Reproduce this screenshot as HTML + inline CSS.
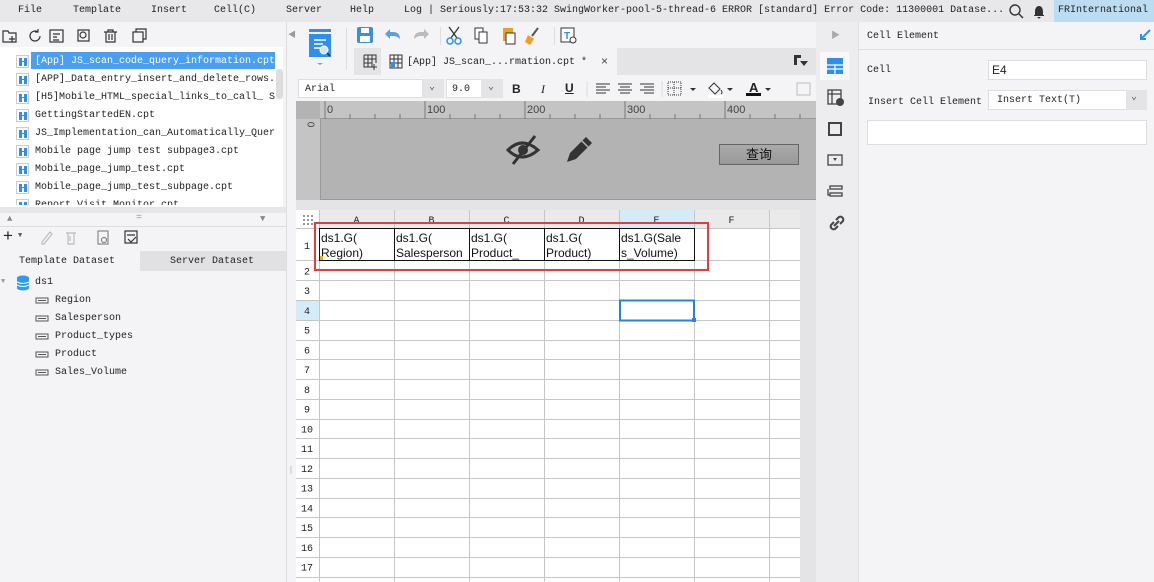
<!DOCTYPE html>
<html><head><meta charset="utf-8">
<style>
*{margin:0;padding:0;box-sizing:border-box}
html,body{width:1154px;height:582px;overflow:hidden}
body{background:#f4f4f6;font-family:"Liberation Mono","Noto Sans CJK SC",monospace;font-size:10px;color:#222;position:relative}
.a{position:absolute}
.t{position:absolute;white-space:nowrap}
</style></head><body>
<div class="a" style="left:0;top:0;width:1154px;height:22px;background:#e8e8ea"></div>
<div class="t" style="left:18px;top:5px">File</div>
<div class="t" style="left:73px;top:5px">Template</div>
<div class="t" style="left:151px;top:5px">Insert</div>
<div class="t" style="left:214px;top:5px">Cell(C)</div>
<div class="t" style="left:286px;top:5px">Server</div>
<div class="t" style="left:350px;top:5px">Help</div>
<div class="t" style="left:404px;top:5px">Log | Seriously:17:53:32 SwingWorker-pool-5-thread-6 ERROR [standard] Error Code: 11300001 Datase...</div>
<svg class="a" style="left:1008px;top:3px" width="40" height="16"><circle cx="7" cy="7" r="5" fill="none" stroke="#333" stroke-width="1.4"/><path d="M11 11l4 4" stroke="#333" stroke-width="1.5"/><path d="M31 3c-3 0-4 3-4 6v3h-1v1h10v-1h-1V9c0-3-1-6-4-6zM29.5 14h3a1.5 1.5 0 0 1-3 0z" fill="#333"/></svg>
<div class="a" style="left:1054px;top:0;width:100px;height:22px;background:#bcdcf2"></div>
<div class="t" style="left:1058px;top:5px">FRInternational</div>

<div class="a" style="left:0;top:22px;width:286px;height:560px;background:#f4f4f6"></div>
<svg class="a" style="left:0;top:26px" width="150" height="20" fill="none" stroke="#333" stroke-width="1.2">
<path d="M3 5h5l1 2h7v9H3z"/><path d="M12 10v6M9 13h6"/>
<path d="M38 6a5 5 0 1 0 2 4M38 3v3h-3"/>
<rect x="50" y="4" width="13" height="12"/><path d="M53 8h7M53 11h4M53 14h6"/>
<rect x="78" y="4" width="11" height="11"/><circle cx="83" cy="9" r="3"/>
<path d="M104 6h13M108 6V4h5v2M106 6v10h9V6M109 8v6M112 8v6"/>
<rect x="133" y="6" width="10" height="10"/><path d="M136 6V3h10v10h-3"/>
</svg>
<div class="a" style="left:0;top:47px;width:283px;height:160px;background:#fff"></div>
<div class="a" style="left:31px;top:52px;width:244px;height:17px;background:#4a9ff5"></div>
<div id="files"></div>
<div class="a" style="left:276px;top:69px;width:7px;height:30px;background:#ddd;border-radius:3px"></div>
<div class="a" style="left:0;top:207px;width:286px;height:6px;background:#e6e6e6"></div>
<div class="t" style="left:7px;top:214px;color:#888;font-size:9px">▲</div>
<div class="t" style="left:136px;top:213px;color:#999">=</div>
<div class="t" style="left:260px;top:214px;color:#888;font-size:9px">▼</div>
<div class="a" style="left:0;top:226px;width:286px;height:1px;background:#ddd"></div>
<div class="t" style="left:3px;top:226px;font-size:17px;font-family:'Liberation Sans';color:#222">+</div>
<div class="t" style="left:18px;top:232px;font-size:7px;color:#555">▼</div>
<svg class="a" style="left:36px;top:228px" width="110" height="18" fill="none" stroke="#bbb" stroke-width="1.2"><path d="M6 14l8-10 2 2-8 10H6z"/><path d="M30 5h10M32 5v11h6V5M34 8v5"/><rect x="62" y="3" width="10" height="13" stroke="#888"/><circle cx="68" cy="12" r="2.5" stroke="#888"/><rect x="89" y="3" width="12" height="12" stroke="#333"/><path d="M91 7h8M92 11l3 3 5-5" stroke="#333"/></svg>
<div class="a" style="left:0;top:251px;width:286px;height:20px;background:#f4f4f6"></div>
<div class="a" style="left:140px;top:251px;width:146px;height:20px;background:#e1e1e3"></div>
<div class="t" style="left:19px;top:256px">Template Dataset</div>
<div class="t" style="left:170px;top:256px">Server Dataset</div>
<div class="t" style="left:1px;top:278px;font-size:7px;color:#999">▼</div>
<svg class="a" style="left:15px;top:274px" width="16" height="18"><ellipse cx="8" cy="4" rx="6" ry="2.5" fill="#2f9bf0"/><rect x="2" y="4" width="12" height="10" fill="#2f9bf0"/><ellipse cx="8" cy="14" rx="6" ry="2.5" fill="#2f9bf0"/><path d="M2 8q6 3 12 0M2 11q6 3 12 0" stroke="#fff" fill="none"/></svg>
<div class="t" style="left:35px;top:277px">ds1</div>
<div id="fields"></div>

<div class="a" style="left:286px;top:22px;width:1px;height:560px;background:#ddd"></div>
<div class="t" style="left:287px;top:465px;color:#aaa;font-size:8px">‖</div>

<div class="a" style="left:288px;top:22px;width:528px;height:26px;background:#f4f4f6"></div>
<div class="t" style="left:288px;top:29px;color:#999;font-size:8px">◀</div>
<svg class="a" style="left:306px;top:28px" width="30" height="38"><rect x="3" y="1" width="22" height="3" fill="#2f8ff0"/><rect x="3" y="6" width="22" height="23" fill="#2f8ff0"/><path d="M8 12h12M8 16h9M8 20h7" stroke="#fff" stroke-width="1.5"/><circle cx="18" cy="22" r="4" fill="#cfe6fb" stroke="#fff"/><path d="M21 25l3 3" stroke="#333" stroke-width="1.5"/><path d="M11 35l3 2 3-2z" fill="#999"/></svg>
<div class="a" style="left:346px;top:28px;width:1px;height:42px;background:#ddd"></div>
<svg class="a" style="left:354px;top:25px" width="240" height="22">
<rect x="3" y="2" width="16" height="16" rx="2" fill="#3a8fe0"/><rect x="7" y="3" width="8" height="5" fill="#fff"/><rect x="6" y="11" width="10" height="6" fill="#fff"/>
<path d="M46 14c0-5-3-7-7-7h-3v-3l-5 5 5 5v-3h3c3 0 5 1 7 3z" fill="#5a9ee8"/>
<path d="M60 14c0-5 3-7 7-7h3v-3l5 5-5 5v-3h-3c-3 0-5 1-7 3z" fill="#bbb"/>
<rect x="86" y="2" width="1" height="18" fill="#ddd"/>
<path d="M95 2l8 11M105 2l-8 11" stroke="#333" stroke-width="1.3"/><circle cx="96" cy="16" r="3" fill="none" stroke="#2f8ff0" stroke-width="1.5"/><circle cx="104" cy="16" r="3" fill="none" stroke="#2f8ff0" stroke-width="1.5"/>
<rect x="121" y="3" width="8" height="11" fill="#fff" stroke="#333"/><rect x="125" y="7" width="8" height="11" fill="#fff" stroke="#333"/>
<rect x="149" y="3" width="10" height="13" fill="#f0a020"/><rect x="152" y="8" width="9" height="11" fill="#fff" stroke="#333"/>
<path d="M184 3l-6 8" stroke="#555" stroke-width="2"/><path d="M174 10l6 4-4 6-5-3z" fill="#f0a020"/>
<rect x="200" y="2" width="1" height="18" fill="#ddd"/>
<rect x="207" y="3" width="13" height="14" fill="#fff" stroke="#333"/><text x="210" y="14" font-size="10" fill="#2f8ff0" font-family="Liberation Sans" font-weight="bold">T</text><circle cx="219" cy="15" r="3" fill="#fff" stroke="#333"/>
</svg>
<div class="a" style="left:354px;top:48px;width:462px;height:27px;background:#e4e4e6"></div>
<div class="a" style="left:381px;top:48px;width:236px;height:27px;background:#f4f4f6"></div>
<svg class="a" style="left:362px;top:52px" width="60" height="20" fill="none" stroke="#333"><path d="M2 3h12v8M2 3v12h8M2 7h12M2 11h8M6 3v12M10 3v12M12 12v6M9 15h6"/><rect x="28" y="3" width="12" height="13"/><path d="M28 7h12M28 11h12M32 3v13M36 3v13"/><rect x="29" y="10" width="4" height="6" fill="#2f8ff0" stroke="none"/></svg>
<div class="t" style="left:407px;top:57px">[App] JS_scan_...rmation.cpt *</div>
<div class="t" style="left:601px;top:54px;font-size:12px;color:#444;font-family:'Liberation Sans'">×</div>
<svg class="a" style="left:793px;top:54px" width="16" height="14"><path d="M1 1h7v3H4v7H1z" fill="#333"/><path d="M7 7h8l-4 5z" fill="#333"/></svg>
<div class="a" style="left:298px;top:79px;width:128px;height:19px;background:#fff;border:1px solid #ddd"></div>
<div class="a" style="left:422px;top:79px;width:22px;height:19px;background:#e4e4e6"></div>
<div class="t" style="left:305px;top:84px">Arial</div>
<div class="t" style="left:429px;top:81px;color:#555">⌄</div>
<div class="a" style="left:446px;top:79px;width:57px;height:19px;background:#fff;border:1px solid #ddd"></div>
<div class="a" style="left:481px;top:79px;width:22px;height:19px;background:#e4e4e6"></div>
<div class="t" style="left:452px;top:84px">9.0</div>
<div class="t" style="left:488px;top:81px;color:#555">⌄</div>
<div class="t" style="left:512px;top:82px;font:bold 12px 'Liberation Sans'">B</div>
<div class="t" style="left:541px;top:82px;font:italic 12px 'Liberation Serif'">I</div>
<div class="t" style="left:565px;top:81px;font:bold 12px 'Liberation Sans';text-decoration:underline">U</div>
<svg class="a" style="left:586px;top:80px" width="230" height="18" stroke="#333" fill="none">
<path d="M1 1v16" stroke="#ddd"/><path d="M10 4h14M10 7h10M10 10h14M10 13h10M32 4h14M34 7h10M32 10h14M34 13h10M54 4h14M58 7h10M54 10h14M58 13h10"/>
<path d="M76 1v16" stroke="#ddd"/><rect x="82" y="2" width="13" height="13" stroke-dasharray="1 1"/><path d="M88 2v13M82 8h13" stroke-dasharray="1 1"/><path d="M104 8h6l-3 3z" fill="#333" stroke="none"/>
<path d="M128 3l6 6-5 5-6-6z"/><path d="M135 10q2 3 0 4"/><rect x="122" y="15" width="15" height="3" fill="#fff" stroke="none"/><path d="M141 8h6l-3 3z" fill="#333" stroke="none"/>
<text x="163" y="12" font-family="Liberation Sans" font-weight="bold" font-size="13" fill="#222" stroke="none">A</text><rect x="160" y="13" width="15" height="3" fill="#111" stroke="none"/><path d="M179 8h6l-3 3z" fill="#333" stroke="none"/>
<rect x="211" y="3" width="13" height="12" stroke="#bbb"/>
</svg>
<div class="a" style="left:296px;top:101px;width:520px;height:107px;background:#b3b3b3"></div>
<div class="a" style="left:320px;top:101px;width:496px;height:18px;background:#c4c4c4;border-bottom:1px solid #999"></div>
<div class="a" style="left:296px;top:119px;width:24px;height:81px;background:#c4c4c4"></div>
<div class="a" style="left:320px;top:119px;width:496px;height:81px;border-left:1px solid #999;border-bottom:1px solid #999"></div>
<svg class="a" style="left:320px;top:101px" width="496" height="18" stroke="#777"><path d="M5 0v18M105 0v18M205 0v18M305 0v18M405 0v18M30 13v5M55 13v5M80 13v5M130 13v5M155 13v5M180 13v5M230 13v5M255 13v5M280 13v5M330 13v5M355 13v5M380 13v5M430 13v5M455 13v5M480 13v5"/>
<g fill="#444" stroke="none" font-family="Liberation Sans" font-size="11"><text x="7" y="12">0</text><text x="107" y="12">100</text><text x="207" y="12">200</text><text x="307" y="12">300</text><text x="407" y="12">400</text></g></svg>
<div class="t" style="left:307px;top:119px;font:10px 'Liberation Sans';color:#444;transform:rotate(90deg)">0</div>
<svg class="a" style="left:505px;top:132px" width="90" height="36"><path d="M3 18q14-14 30 0q-16 14-30 0z" fill="none" stroke="#333" stroke-width="3"/><circle cx="18" cy="18" r="5" fill="#333"/><path d="M30 4L8 32" stroke="#333" stroke-width="3"/><path d="M62 30l3-9 16-16 6 6-16 16z" fill="#333"/><path d="M77 9l6 6" stroke="#b3b3b3" stroke-width="1.5"/></svg>
<div class="a" style="left:719px;top:144px;width:80px;height:21px;background:linear-gradient(#aaa,#999);border:1px solid #666"></div>
<div class="t" style="left:746px;top:146px;font:13px 'Noto Sans CJK SC',sans-serif;color:#111;line-height:16px">查询</div>
<div class="a" style="left:296px;top:200px;width:520px;height:10px;background:#e4e4e6"></div>

<svg class="a" style="left:296px;top:210px" width="520" height="372" font-family="Liberation Mono" font-size="10">
<rect x="0" y="0" width="504" height="372" fill="#fff"/>
<rect x="504" y="0" width="16" height="372" fill="#e4e4e6"/>
<rect x="0" y="0" width="504" height="18" fill="#eaeaea"/>
<rect x="0" y="0" width="23" height="372" fill="#fff"/>
<rect x="323" y="0" width="75" height="18" fill="#d4ecf8"/>
<rect x="0" y="90" width="23" height="20" fill="#d4ecf8"/>
<g fill="#999"><rect x="7" y="5" width="2" height="2"/><rect x="11" y="5" width="2" height="2"/><rect x="15" y="5" width="2" height="2"/><rect x="7" y="9" width="2" height="2"/><rect x="11" y="9" width="2" height="2"/><rect x="15" y="9" width="2" height="2"/><rect x="7" y="13" width="2" height="2"/><rect x="11" y="13" width="2" height="2"/><rect x="15" y="13" width="2" height="2"/></g>
<g stroke="#c6c6c6" id="gl"></g>
<g fill="#222" text-anchor="middle" id="gt"></g>
<g stroke="#111" fill="none"><rect x="23.5" y="18.5" width="375" height="32"/><path d="M98.5 18v33M173.5 18v33M248.5 18v33M323.5 18v33"/></g>
<g font-family="Liberation Sans" font-size="12" fill="#111"><text x="25" y="32">ds1.G(</text><text x="25" y="47">Region)</text><text x="100" y="32">ds1.G(</text><text x="100" y="47">Salesperson</text><text x="175" y="32">ds1.G(</text><text x="175" y="47">Product_</text><text x="250" y="32">ds1.G(</text><text x="250" y="47">Product)</text><text x="325" y="32">ds1.G(Sale</text><text x="325" y="47">s_Volume)</text></g>
<rect x="24" y="46" width="3" height="4" fill="#e8b400"/>
<rect x="19" y="13" width="393" height="47" fill="none" stroke="#e83a3a" stroke-width="2"/>
<rect x="324" y="90.5" width="74" height="20" fill="none" stroke="#2f7fe0" stroke-width="2"/>
<rect x="396" y="108" width="4" height="4" fill="#2f7fe0"/>
</svg>

<div class="a" style="left:816px;top:22px;width:42px;height:560px;background:#ededef"></div>
<div class="t" style="left:831px;top:28px;color:#aaa;font-size:9px">▶</div>
<div class="a" style="left:820px;top:52px;width:29px;height:28px;background:#f8f8f9"></div>
<svg class="a" style="left:826px;top:56px" width="22" height="180">
<rect x="1" y="2" width="16" height="16" fill="#2f8ff0"/><path d="M1 9h16M9 9v9M1 13h16" stroke="#fff" stroke-width="1.2"/>
<g fill="none" stroke="#444" stroke-width="1.3"><rect x="2" y="34" width="13" height="14"/><path d="M2 38h13M6 34v14"/></g><circle cx="14" cy="46" r="4" fill="#444"/>
<rect x="3" y="67" width="12" height="12" fill="none" stroke="#444" stroke-width="2"/>
<rect x="2" y="99" width="14" height="10" fill="none" stroke="#444" stroke-width="1.3"/><path d="M7 102h4l-2 3z" fill="#444"/>
<g fill="none" stroke="#444" stroke-width="1.3"><rect x="4" y="130" width="12" height="3"/><rect x="4" y="137" width="12" height="3"/><path d="M2 133v6h2"/></g>
<g fill="none" stroke="#444" stroke-width="2"><path d="M8 166l-3 3a3 3 0 0 0 4 4l3-3M10 164l3-3a3 3 0 0 1 4 4l-3 3M8 170l5-5"/></g>
</svg>
<div class="a" style="left:858px;top:22px;width:296px;height:560px;background:#f4f4f6;border-left:1px solid #e0e0e0"></div>
<div class="t" style="left:867px;top:31px">Cell Element</div>
<svg class="a" style="left:1138px;top:28px" width="14" height="14"><path d="M12 2L3 11M3 6v5h5" stroke="#2f8ff0" stroke-width="2" fill="none"/></svg>
<div class="a" style="left:858px;top:49px;width:296px;height:1px;background:#ddd"></div>
<div class="t" style="left:867px;top:65px">Cell</div>
<div class="a" style="left:988px;top:60px;width:159px;height:20px;background:#fff;border:1px solid #ddd"></div>
<div class="t" style="left:992px;top:63px;font:12px 'Liberation Sans'">E4</div>
<div class="t" style="left:868px;top:97px">Insert Cell Element</div>
<div class="a" style="left:988px;top:90px;width:159px;height:20px;background:#fff;border:1px solid #ddd"></div>
<div class="a" style="left:1126px;top:90px;width:21px;height:20px;background:#e4e4e6"></div>
<div class="t" style="left:997px;top:95px">Insert Text(T)</div>
<div class="t" style="left:1131px;top:91px;color:#555">⌄</div>
<div class="a" style="left:867px;top:120px;width:280px;height:25px;background:#fff;border:1px solid #ddd"></div>

<script>
var files=[["[App] JS_scan_code_query_information.cpt",1],["[APP]_Data_entry_insert_and_delete_rows.",0],["[H5]Mobile_HTML_special_links_to_call_ S",0],["GettingStartedEN.cpt",0],["JS_Implementation_can_Automatically_Quer",0],["Mobile page jump test subpage3.cpt",0],["Mobile_page_jump_test.cpt",0],["Mobile_page_jump_test_subpage.cpt",0],["Report_Visit_Monitor.cpt",0]];
var h="";files.forEach(function(f,i){var y=54+i*18;
h+='<svg class="a" style="left:16px;top:'+(y+1)+'px" width="14" height="14"><rect x="0.5" y="0.5" width="12" height="12" fill="#fff" stroke="#ccc"/><path d="M3 3v8h3V7h2v4h3V3H8v3H6V3z" fill="#2f8ff0"/></svg>';
h+='<div class="t" style="left:35px;top:'+(y+2)+'px;color:'+(f[1]?'#fff':'#222')+'">'+f[0]+'</div>';});
h+='<div class="a" style="left:0;top:205px;width:283px;height:2px;background:#fff"></div>';
document.getElementById("files").innerHTML=h;
var fl=["Region","Salesperson","Product_types","Product","Sales_Volume"],g="";
fl.forEach(function(n,i){var y=294+i*18;g+='<svg class="a" style="left:35px;top:'+(y+2)+'px" width="16" height="10"><rect x="1" y="2" width="12" height="5" fill="none" stroke="#555"/><path d="M3 4.5h8" stroke="#555"/></svg><div class="t" style="left:55px;top:'+(y+1)+'px">'+n+'</div>';});
document.getElementById("fields").innerHTML=g;
var NS="http://www.w3.org/2000/svg",gl=document.getElementById("gl"),gt=document.getElementById("gt");
function ln(x1,y1,x2,y2){var l=document.createElementNS(NS,"line");l.setAttribute("x1",x1);l.setAttribute("y1",y1);l.setAttribute("x2",x2);l.setAttribute("y2",y2);gl.appendChild(l);}
function tx(x,y,s){var t=document.createElementNS(NS,"text");t.setAttribute("x",x);t.setAttribute("y",y);t.textContent=s;gt.appendChild(t);}
[23,98,173,248,323,398,473].forEach(function(x){ln(x+.5,0,x+.5,372);});
ln(0,18.5,504,18.5);ln(0,50.5,504,50.5);
for(var r=2;r<=19;r++){var y=50.5+(r-1)*19.75;ln(0,Math.round(y)+.5,504,Math.round(y)+.5);}
tx(11,39,"1");
for(var r=2;r<=17;r++){var yc=50.5+(r-2)*19.75+9.9;tx(11,yc+4,String(r));}
["A","B","C","D","E","F"].forEach(function(c,i){tx(60.5+i*75,13,c);});
</script>
</body></html>
